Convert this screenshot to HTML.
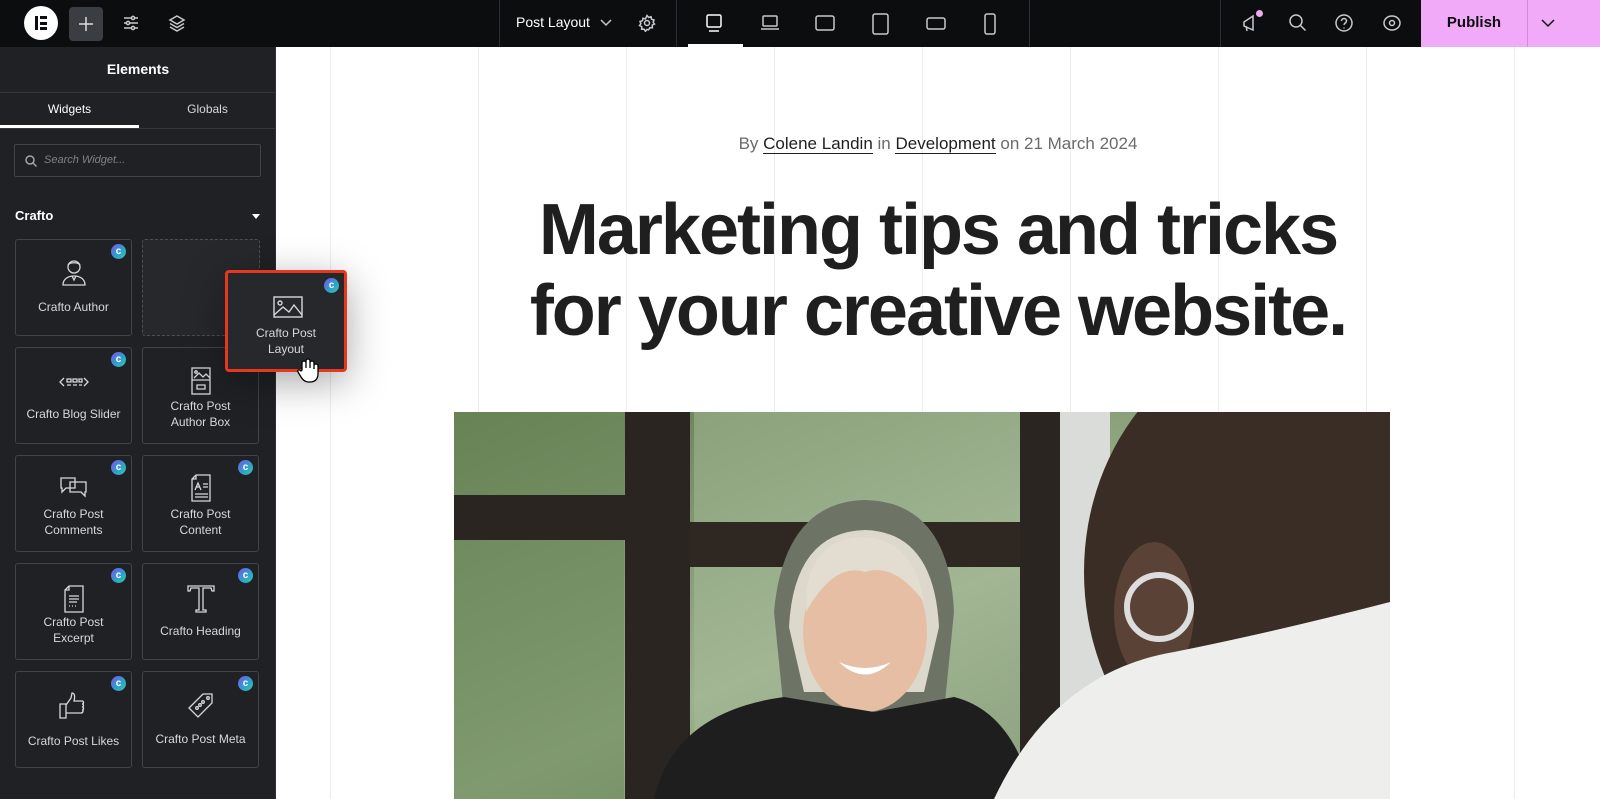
<!DOCTYPE html>
<html><head><meta charset="utf-8"><style>
*{margin:0;padding:0;box-sizing:border-box}
body{width:1600px;height:799px;overflow:hidden;background:#fff;font-family:"Liberation Sans",sans-serif;position:relative}
.top{position:absolute;left:0;top:0;width:1600px;height:47px;background:#0c0d0e}
.side{position:absolute;left:0;top:47px;width:276px;height:752px;background:#1f2124}
.canvas{position:absolute;left:276px;top:47px;width:1324px;height:752px;background:#fff}
.vl{position:absolute;top:0;height:752px;width:1px;background:#ececec}
.ic{position:absolute;stroke:#c8c9cc;fill:none;stroke-width:1.5}
.card{position:absolute;width:117px;height:97px;border:1px solid #3f444b;border-radius:3px;color:#d5d8dc;font-size:12px;text-align:center;line-height:16px}
.badge{position:absolute;right:5px;top:4px;width:15px;height:15px;border-radius:50%;background:linear-gradient(135deg,#7a4ef0,#2aa6c9 60%,#3fc6a0);color:#fff;font-size:10px;font-weight:bold;line-height:15px;text-align:center}
.card svg{position:absolute;left:50%;transform:translateX(-50%);stroke:#d5d8dc;fill:none;stroke-width:1.3}
.lbl{position:absolute;left:0;right:0}
</style></head><body>
<div class="top">
  <div style="position:absolute;left:24px;top:6px;width:34px;height:34px;border-radius:50%;background:#fff"></div>
  <div style="position:absolute;left:35px;top:16px;width:3px;height:14px;background:#0c0d0e"></div>
  <div style="position:absolute;left:40px;top:16px;width:7px;height:3px;background:#0c0d0e"></div>
  <div style="position:absolute;left:40px;top:21.5px;width:7px;height:3px;background:#0c0d0e"></div>
  <div style="position:absolute;left:40px;top:27px;width:7px;height:3px;background:#0c0d0e"></div>
  <div style="position:absolute;left:69px;top:7px;width:34px;height:34px;border-radius:4px;background:#3a3d42"></div>
  <svg class="ic" style="left:78px;top:16px" width="16" height="16"><path d="M8 1v14M1 8h14" stroke="#ddd"/></svg>
  <svg class="ic" style="left:123px;top:15px" width="16" height="16"><path d="M1 3h14M1 8h14M1 13h14"/><circle cx="10" cy="3" r="1.6" fill="#0c0d0e"/><circle cx="5" cy="8" r="1.6" fill="#0c0d0e"/><circle cx="10" cy="13" r="1.6" fill="#0c0d0e"/></svg>
  <svg class="ic" style="left:168px;top:14px" width="18" height="18"><path d="M9 2l7 4-7 4-7-4zM2 9.5l7 4 7-4M2 13l7 4 7-4"/></svg>
  <div style="position:absolute;left:499px;top:0;width:1px;height:47px;background:#2c2f33"></div>
  <div style="position:absolute;left:516px;top:14px;color:#fff;font-size:14px">Post Layout</div>
  <svg class="ic" style="left:599px;top:18px" width="14" height="10"><path d="M2 2l5 5 5-5"/></svg>
  <svg class="ic" style="left:638px;top:14px" width="18" height="18"><circle cx="9" cy="9" r="2.5"/><path d="M9 1.5l1.6 2 2.4-.8.5 2.5 2.5.8-.9 2.3 1.4 1.7-2.3 1.2.2 2.5-2.5-.1-1.3 2.2L9 15.5l-1.6 1.8-1.3-2.2-2.5.1.2-2.5L1.5 11.5l1.4-1.7L2 7.5l2.5-.8.5-2.5 2.4.8z"/></svg>
  <div style="position:absolute;left:676px;top:0;width:1px;height:47px;background:#2c2f33"></div>
  <div style="position:absolute;left:1029px;top:0;width:1px;height:47px;background:#2c2f33"></div>
  <div style="position:absolute;left:1220px;top:0;width:1px;height:47px;background:#2c2f33"></div>
  <svg class="ic" style="left:704px;top:13px;stroke:#fff" width="22" height="22"><rect x="3" y="2" width="14" height="12" rx="1.5"/><path d="M5 18h10"/></svg>
  <div style="position:absolute;left:688px;top:44px;width:55px;height:3px;background:#fff"></div>
  <svg class="ic" style="left:759px;top:13px" width="22" height="22"><rect x="4" y="3" width="14" height="10" rx="1"/><path d="M2 16h18"/></svg>
  <svg class="ic" style="left:814px;top:13px" width="22" height="22"><rect x="2" y="3" width="18" height="14" rx="2"/></svg>
  <svg class="ic" style="left:870px;top:12px" width="22" height="24"><rect x="3" y="2" width="15" height="20" rx="2"/></svg>
  <svg class="ic" style="left:925px;top:14px" width="22" height="20"><rect x="2" y="4" width="18" height="11" rx="2"/></svg>
  <svg class="ic" style="left:981px;top:12px" width="20" height="24"><rect x="4" y="2" width="10" height="20" rx="2"/></svg>
  <svg class="ic" style="left:1240px;top:12px" width="22" height="22"><path d="M4 10l9-6v14l-9-4zM4 10v4M6 14l1 5"/></svg>
  <div style="position:absolute;left:1256px;top:10px;width:7px;height:7px;border-radius:50%;background:#f0a8f5"></div>
  <svg class="ic" style="left:1288px;top:13px" width="20" height="20"><circle cx="8" cy="8" r="6"/><path d="M12.5 12.5l5 5"/></svg>
  <svg class="ic" style="left:1334px;top:13px" width="20" height="20"><circle cx="10" cy="10" r="8"/><path d="M7.5 8a2.5 2.5 0 115 0c0 2-2.5 2-2.5 4M10 14.5v1"/></svg>
  <svg class="ic" style="left:1381px;top:13px" width="22" height="20"><ellipse cx="11" cy="10" rx="8" ry="7"/><circle cx="11" cy="10" r="2.5"/></svg>
  <div style="position:absolute;left:1421px;top:0;width:106px;height:47px;background:#f0aaf7;color:#0c0d0e;font-size:15px;font-weight:bold;text-align:center;line-height:46px">Publish</div>
  <div style="position:absolute;left:1527px;top:0;width:1px;height:47px;background:#d688e0"></div>
  <div style="position:absolute;left:1528px;top:0;width:72px;height:47px;background:#f0aaf7"></div>
  <svg class="ic" style="left:1540px;top:18px;stroke:#0c0d0e" width="16" height="12"><path d="M2 2l6 6 6-6"/></svg>
</div>

<div class="side">
  <div style="position:absolute;left:0;top:0;width:276px;height:46px;border-bottom:1px solid #34373c;color:#fff;font-weight:bold;font-size:14px;text-align:center;line-height:45px">Elements</div>
  <div style="position:absolute;left:0;top:46px;width:139px;height:35px;color:#fff;font-size:12px;text-align:center;line-height:33px">Widgets</div>
  <div style="position:absolute;left:139px;top:46px;width:137px;height:35px;color:#d5d8dc;font-size:12px;text-align:center;line-height:33px">Globals</div>
  <div style="position:absolute;left:0;top:78px;width:139px;height:3px;background:#fff"></div>
  <div style="position:absolute;left:0;top:81px;width:276px;height:1px;background:#34373c"></div>
  <div style="position:absolute;left:275px;top:0;width:1px;height:752px;background:#2c2f33"></div>
  <div style="position:absolute;left:14px;top:97px;width:247px;height:33px;border:1px solid #3f444b;border-radius:2px"></div>
  <svg class="ic" style="left:24px;top:107px;stroke:#9da5ae" width="14" height="14"><circle cx="6" cy="6" r="4"/><path d="M9 9l3.5 3.5"/></svg>
  <div style="position:absolute;left:44px;top:107px;color:#7e848b;font-size:11px;font-style:italic">Search Widget...</div>
  <div style="position:absolute;left:15px;top:161px;color:#fff;font-weight:bold;font-size:13px">Crafto</div>
  <div style="position:absolute;left:252px;top:167px;width:0;height:0;border-left:4px solid transparent;border-right:4px solid transparent;border-top:5px solid #fff"></div>
</div>

<div class="card" style="left:15px;top:239px"><div class="badge">c</div>
  <svg style="top:18px" width="26" height="28"><circle cx="13" cy="9" r="6"/><path d="M7 7c2-3 10-3 12 0M2 27c0-6 5-9 11-9s11 3 11 9zM11 18l2 4 2-4"/></svg>
  <div class="lbl" style="top:59px">Crafto Author</div></div>
<div style="position:absolute;left:142px;top:239px;width:118px;height:97px;border:1px dashed #4a4e55;border-radius:3px;background:#26282c"></div>

<div class="card" style="left:15px;top:347px"><div class="badge">c</div>
  <svg style="top:28px" width="30" height="12"><path d="M5 2L1 6l4 4M25 2l4 4-4 4M8 3h4v3H8zM14 3h4v3h-4zM20 3h3v3h-3zM8 9h4M14 9h4M20 9h3"/></svg>
  <div class="lbl" style="top:58px">Crafto Blog Slider</div></div>
<div class="card" style="left:142px;top:347px">
  <svg style="top:18px" width="22" height="30"><rect x="2" y="2" width="18" height="26"/><path d="M2 14h18M4 12l5-5 4 4 3-3 4 4M7 19h8v4H7z"/><circle cx="6" cy="6" r="1.2"/></svg>
  <div class="lbl" style="top:50px">Crafto Post<br>Author Box</div></div>

<div class="card" style="left:15px;top:455px"><div class="badge">c</div>
  <svg style="top:20px" width="30" height="22"><path d="M2 2h14v10H7l-4 4v-4H2zM11 6h16v10h-1v4l-4-4H11z"/></svg>
  <div class="lbl" style="top:50px">Crafto Post<br>Comments</div></div>
<div class="card" style="left:142px;top:455px"><div class="badge">c</div>
  <svg style="top:17px" width="24" height="30"><path d="M7 2h14v26H3V6zM7 2v4H3M6 17l3-7 3 7M7 14h4M14 11h5M14 14h5M6 21h13M6 24h13"/></svg>
  <div class="lbl" style="top:50px">Crafto Post<br>Content</div></div>

<div class="card" style="left:15px;top:563px"><div class="badge">c</div>
  <svg style="top:20px" width="24" height="30"><path d="M7 2h14v26H3V6zM7 2v4H3M7 12h10M7 15h10M7 18h8M7 22h1M10 22h1M13 22h1"/></svg>
  <div class="lbl" style="top:50px">Crafto Post<br>Excerpt</div></div>
<div class="card" style="left:142px;top:563px"><div class="badge">c</div>
  <svg style="top:20px" width="30" height="30"><path d="M2 2h26v5h-2l-1-3H17v22h3v2H10v-2h3V4H5L4 7H2z"/></svg>
  <div class="lbl" style="top:59px">Crafto Heading</div></div>

<div class="card" style="left:15px;top:671px"><div class="badge">c</div>
  <svg style="top:20px" width="32" height="28"><path d="M2 12h6v14H2zM8 13l5-7 1-5c3 0 3 4 2 8h8c2 0 2 3 0 3 2 0 2 3 0 3 2 0 2 3 0 3 2 0 1 3-1 3H8"/></svg>
  <div class="lbl" style="top:61px">Crafto Post Likes</div></div>
<div class="card" style="left:142px;top:671px"><div class="badge">c</div>
  <svg style="top:20px" width="28" height="26"><path d="M2 16L16 2h9v9L11 25z"/><circle cx="21" cy="6" r="1.3"/><circle cx="10" cy="16" r="1.3"/><circle cx="13" cy="13" r="1.3"/><circle cx="16" cy="10" r="1.3"/></svg>
  <div class="lbl" style="top:59px">Crafto Post Meta</div></div>

<div class="canvas">
  <div class="vl" style="left:54px"></div><div class="vl" style="left:202px"></div><div class="vl" style="left:350px"></div><div class="vl" style="left:498px"></div><div class="vl" style="left:646px"></div><div class="vl" style="left:794px"></div><div class="vl" style="left:942px"></div><div class="vl" style="left:1090px"></div><div class="vl" style="left:1238px"></div>
  <div style="position:absolute;left:0;top:87px;width:1324px;text-align:center;font-size:17px;color:#6b6b6b">By <span style="color:#1f1f1f;border-bottom:1px solid #1f1f1f">Colene Landin</span> in <span style="color:#1f1f1f;border-bottom:1px solid #1f1f1f">Development</span> on 21 March 2024</div>
  <div style="position:absolute;left:0;top:143px;width:1324px;text-align:center;font-size:72px;line-height:81px;font-weight:bold;letter-spacing:-2px;color:#1f1f1f">Marketing tips and tricks<br>for your creative website.</div>
  <svg style="position:absolute;left:178px;top:365px" width="936" height="387" viewBox="0 0 936 387">
    <defs><linearGradient id="g" x1="0" y1="0" x2="1" y2="1"><stop offset="0" stop-color="#5e7a4e"/><stop offset=".5" stop-color="#9cb08c"/><stop offset="1" stop-color="#4f6a43"/></linearGradient></defs>
    <rect width="936" height="387" fill="url(#g)"/>
    <rect x="0" y="0" width="170" height="387" fill="#6e8a5c" opacity=".6"/>
    <rect x="240" y="0" width="330" height="387" fill="#a8bb9a" opacity=".5"/>
    <rect x="171" y="0" width="65" height="387" fill="#2a2520"/>
    <rect x="0" y="83" width="171" height="45" fill="#2a2520"/>
    <rect x="236" y="110" width="340" height="45" fill="#2f2822"/>
    <rect x="566" y="0" width="40" height="387" fill="#2a2520"/>
    <rect x="606" y="0" width="50" height="387" fill="#d9dcd8"/>
    <path d="M320 200 Q330 90 411 88 Q495 90 500 200 L490 300 L330 300z" fill="#6d7466"/>
    <path d="M335 215 Q340 120 411 118 Q480 120 485 215 L470 280 L350 280z" fill="#ddd8cc"/>
    <ellipse cx="411" cy="220" rx="62" ry="80" fill="#e5bea3"/>
    <path d="M352 180 Q360 125 411 125 Q460 128 470 190 Q440 150 411 160 Q380 150 352 200z" fill="#e2ddd0"/>
    <path d="M385 250 Q411 275 437 250 Q411 262 385 250z" fill="#fff"/>
    <path d="M200 387 Q220 300 330 285 L420 300 L500 285 Q560 300 580 387z" fill="#1e1e1e"/>
    <ellipse cx="840" cy="160" rx="210" ry="240" fill="#3a2d26"/>
    <ellipse cx="700" cy="200" rx="40" ry="70" fill="#5a4236"/>
    <circle cx="705" cy="195" r="32" fill="none" stroke="#ddd" stroke-width="6"/>
    <path d="M540 387 Q600 260 720 240 Q820 220 936 190 L936 387z" fill="#eeeeec"/>
  </svg>
</div>

<div style="position:absolute;left:225px;top:270px;width:122px;height:102px;border:3px solid #e8371f;border-radius:4px;background:#26282c;box-shadow:0 10px 40px rgba(0,0,0,.35)">
  <div class="badge" style="right:5px;top:5px">c</div>
  <svg style="position:absolute;left:45px;top:22px;stroke:#d5d8dc;fill:none;stroke-width:1.4" width="30" height="24"><rect x="1" y="2" width="28" height="20"/><circle cx="7" cy="8" r="2"/><path d="M1 20l9-8 6 5 5-7 8 10"/></svg>
  <div style="position:absolute;left:0;right:0;top:52px;color:#d5d8dc;font-size:12px;line-height:16px;text-align:center">Crafto Post<br>Layout</div>
</div>
<svg style="position:absolute;left:296px;top:358px" width="26" height="26"><path d="M6 12V5a2 2 0 014 0v5V3a2 2 0 014 0v7-5a2 2 0 014 0v6-3a2 2 0 014 0v8c0 5-3 8-8 8h-2c-3 0-5-2-7-5l-3-5c-1-2 1-3 3-1z" fill="#fff" stroke="#000" stroke-width="1.3"/></svg>
</body></html>
